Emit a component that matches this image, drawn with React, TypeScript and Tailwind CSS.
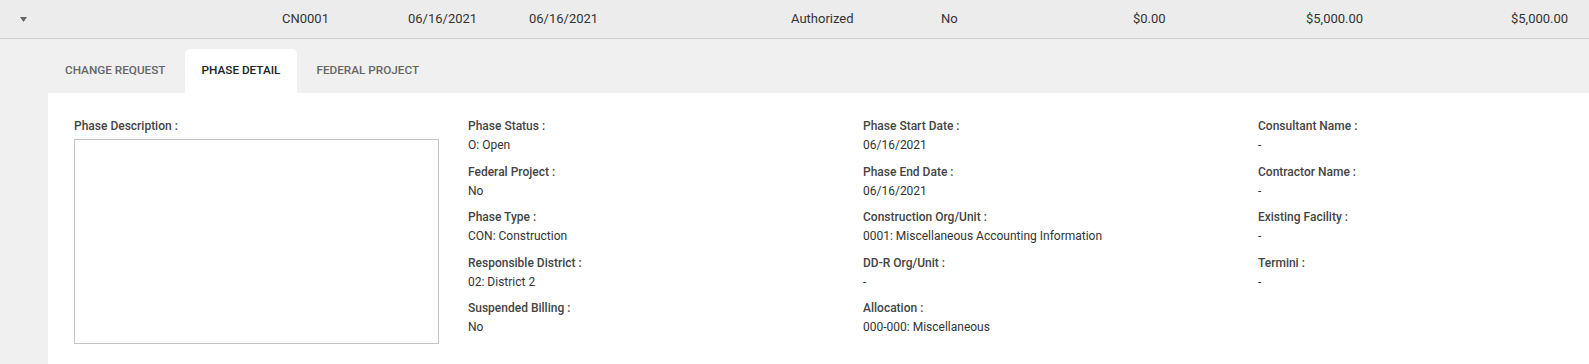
import React from 'react';

const rowCells = ['', 'CN0001', '06/16/2021', '06/16/2021', '', 'Authorized', 'No', '$0.00', '$5,000.00', '$5,000.00'];

const columns: { label: string; value: string }[][] = [
  [
    { label: 'Phase Status :', value: 'O: Open' },
    { label: 'Federal Project :', value: 'No' },
    { label: 'Phase Type :', value: 'CON: Construction' },
    { label: 'Responsible District :', value: '02: District 2' },
    { label: 'Suspended Billing :', value: 'No' },
  ],
  [
    { label: 'Phase Start Date :', value: '06/16/2021' },
    { label: 'Phase End Date :', value: '06/16/2021' },
    { label: 'Construction Org/Unit :', value: '0001: Miscellaneous Accounting Information' },
    { label: 'DD-R Org/Unit :', value: '-' },
    { label: 'Allocation :', value: '000-000: Miscellaneous' },
  ],
  [
    { label: 'Consultant Name :', value: '-' },
    { label: 'Contractor Name :', value: '-' },
    { label: 'Existing Facility :', value: '-' },
    { label: 'Termini :', value: '-' },
  ],
];

function Field({ label, value }: { label: string; value: string }) {
  return (
    <div className="mb-[6.5px]">
      <div className="text-[12px] leading-[20px] font-medium text-[#444]">{label}</div>
      <div className="text-[12px] leading-[19px] text-[#333]">{value}</div>
    </div>
  );
}

export default function App() {
  return (
    <div className="w-[1589px] h-[364px] overflow-hidden bg-[#f0f0f0] font-['Roboto',sans-serif]">
      {/* summary row */}
      <div className="h-[39px] bg-[#ececec] border-b border-[#cfcfcf] grid grid-cols-[270px_126px_121px_111px_151px_150px_192px_173px_205px_1fr] items-center text-[13px] text-[#333]">
        <div className="pl-5 flex items-center">
          <svg width="7" height="5" viewBox="0 0 7 5" className="mt-[1px]">
            <polygon points="0,0 7,0 3.5,5" fill="#666" />
          </svg>
        </div>
        {rowCells.slice(1).map((c, i) => (
          <div key={i} className="pl-3 whitespace-nowrap">
            {c}
          </div>
        ))}
      </div>

      {/* tabs */}
      <div className="pl-[48px] pt-[10px] flex items-end gap-[2px] h-[54px]">
        <div className="px-[17px] h-[44px] flex items-center text-[11.75px] font-medium text-[#666] uppercase">
          Change Request
        </div>
        <div className="px-[17px] h-[44px] flex items-center text-[11.75px] font-medium text-[#222] uppercase bg-white rounded-t-[5px]">
          Phase Detail
        </div>
        <div className="px-[17px] h-[44px] flex items-center text-[11.75px] font-medium text-[#666] uppercase">
          Federal Project
        </div>
      </div>

      {/* panel */}
      <div className="ml-[48px] bg-white h-[300px] pl-[26px] pt-[23px] flex">
        <div className="w-[394px] shrink-0">
          <div className="text-[12px] leading-[20px] font-medium text-[#444]">Phase Description :</div>
          <div className="mt-[3px] w-[365px] h-[205px] border border-[#c4c4c4]" />
        </div>
        {columns.map((col, i) => (
          <div key={i} className="w-[395px] shrink-0">
            {col.map((f) => (
              <Field key={f.label} label={f.label} value={f.value} />
            ))}
          </div>
        ))}
      </div>
    </div>
  );
}
